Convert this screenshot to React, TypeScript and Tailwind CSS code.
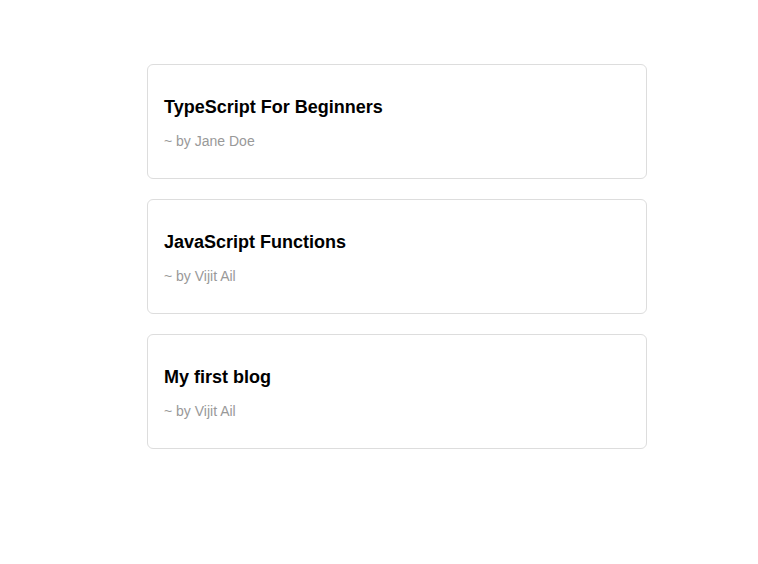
const posts = [
  { title: "TypeScript For Beginners", author: "Jane Doe" },
  { title: "JavaScript Functions", author: "Vijit Ail" },
  { title: "My first blog", author: "Vijit Ail" },
];

export default function App() {
  return (
    <main className="min-h-screen bg-white font-['Liberation_Sans',Arial,sans-serif]">
      <div className="ml-[147px] flex w-[500px] flex-col gap-5 pt-16">
        {posts.map((post) => (
          <div key={post.title} className="flex h-[115px] flex-col rounded-md border border-[#dddddd] px-4 pt-[32px]">
            <h3 className="text-[18px] font-bold leading-[21px] text-black">{post.title}</h3>
            <p className="mt-[15px] text-[14px] leading-[16px] text-[#999999]">~ by {post.author}</p>
          </div>
        ))}
      </div>
    </main>
  );
}
